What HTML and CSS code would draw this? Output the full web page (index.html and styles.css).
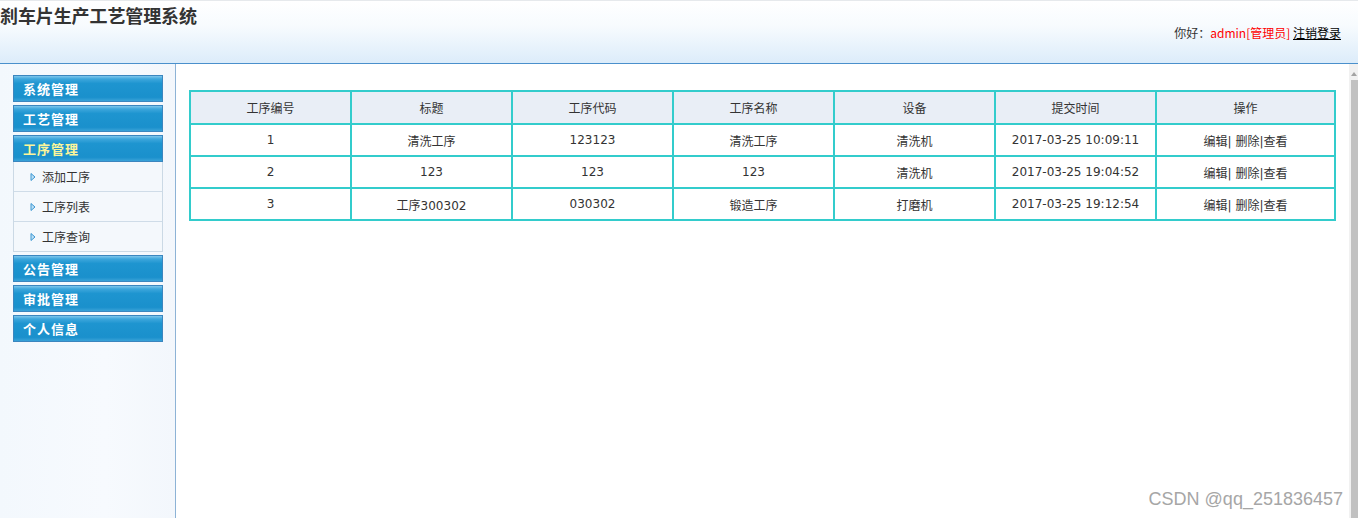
FILE: index.html
```html
<!DOCTYPE html>
<html lang="zh-CN">
<head>
<meta charset="utf-8">
<title>刹车片生产工艺管理系统</title>
<link rel="stylesheet" href="styles.css">
</head>
<body>
<div class="page">
  <header class="top">
    <h1 class="title">刹车片生产工艺管理系统</h1>
    <div class="user">你好：<span class="uname">admin[管理员]</span> <a class="logout" href="#">注销登录</a></div>
  </header>
  <div class="main">
    <aside class="side">
      <div class="menu">系统管理</div>
      <div class="menu">工艺管理</div>
      <div class="menu menu-open">工序管理</div>
      <ul class="sub">
        <li class="sub-item"><svg class="tri" width="6" height="10" viewBox="0 0 6 10"><path d="M1 1.5 L5 5 L1 8.5 Z" fill="#bfe0f5" stroke="#3b97d3" stroke-width="1"/></svg>添加工序</li>
        <li class="sub-item"><svg class="tri" width="6" height="10" viewBox="0 0 6 10"><path d="M1 1.5 L5 5 L1 8.5 Z" fill="#bfe0f5" stroke="#3b97d3" stroke-width="1"/></svg>工序列表</li>
        <li class="sub-item"><svg class="tri" width="6" height="10" viewBox="0 0 6 10"><path d="M1 1.5 L5 5 L1 8.5 Z" fill="#bfe0f5" stroke="#3b97d3" stroke-width="1"/></svg>工序查询</li>
      </ul>
      <div class="menu">公告管理</div>
      <div class="menu">审批管理</div>
      <div class="menu">个人信息</div>
    </aside>
    <section class="content">
      <table class="grid">
        <colgroup>
          <col class="c"><col class="c"><col class="c"><col class="c"><col class="c"><col class="c"><col>
        </colgroup>
        <thead>
          <tr><th>工序编号</th><th>标题</th><th>工序代码</th><th>工序名称</th><th>设备</th><th>提交时间</th><th>操作</th></tr>
        </thead>
        <tbody>
          <tr><td>1</td><td>清洗工序</td><td>123123</td><td>清洗工序</td><td>清洗机</td><td>2017-03-25 10:09:11</td><td>编辑| 删除|查看</td></tr>
          <tr><td>2</td><td>123</td><td>123</td><td>123</td><td>清洗机</td><td>2017-03-25 19:04:52</td><td>编辑| 删除|查看</td></tr>
          <tr><td>3</td><td>工序300302</td><td>030302</td><td>锻造工序</td><td>打磨机</td><td>2017-03-25 19:12:54</td><td>编辑| 删除|查看</td></tr>
        </tbody>
      </table>
    </section>
    <div class="vscroll">
      <div class="arrow"></div>
      <div class="thumb"></div>
    </div>
  </div>
  <div class="watermark">CSDN @qq_251836457</div>
</div>
</body>
</html>
```
FILE: styles.css
```css
html, body {
  margin: 0;
  padding: 0;
}
body {
  width: 1358px;
  height: 518px;
  overflow: hidden;
  font-family: "Noto Sans CJK SC", "DejaVu Sans", sans-serif;
  font-size: 12px;
  color: #333;
  background: #fff;
}
.page {
  position: relative;
  width: 1358px;
  height: 518px;
  display: flex;
  flex-direction: column;
}
.top {
  height: 62px;
  border-top: 1px solid #e6e9ec;
  border-bottom: 1px solid #4a90cc;
  background: linear-gradient(to bottom, #ffffff 0%, #f7fbfe 40%, #dcecfa 100%);
  display: flex;
  justify-content: space-between;
  align-items: flex-start;
  flex-shrink: 0;
}
.title {
  margin: 0;
  padding-top: 2px;
  font-size: 18px;
  line-height: 24px;
  font-weight: bold;
  color: #333;
  letter-spacing: -0.1px;
}
.user {
  padding-top: 24px;
  padding-right: 17px;
  line-height: 16px;
  font-size: 12px;
  color: #333;
}
.uname {
  color: #f00;
}
.logout {
  color: #000;
  text-decoration: underline;
}
.main {
  flex: 1;
  display: flex;
  min-height: 0;
}
.side {
  width: 150px;
  padding: 11px 12px 0 13px;
  border-right: 1px solid #8db3d6;
  background: linear-gradient(to right, #f3f8fd 0%, #f7fafe 60%, #f3f7fc 100%);
  flex-shrink: 0;
}
.menu {
  height: 25px;
  line-height: 25px;
  border: 1px solid #3b86bf;
  margin-bottom: 3px;
  padding-left: 9px;
  color: #fff;
  font-weight: bold;
  font-size: 13px;
  letter-spacing: 1px;
  background: linear-gradient(to bottom, #7ec6ec 0%, #3da6dc 12%, #1e95d0 30%, #1a90cc 85%, #3aa2d8 100%);
}
.menu-open {
  color: #fcf59a;
  margin-bottom: 0;
}
.sub {
  list-style: none;
  margin: 0 0 3px 0;
  padding: 0;
  border: 1px solid #cbd9e5;
  border-top: none;
  background: #f4f8fc;
}
.sub-item {
  height: 29px;
  border-bottom: 1px solid #cfdce8;
  display: flex;
  align-items: center;
  padding-left: 16px;
  color: #333;
  font-size: 12px;
}
.sub-item:last-child {
  border-bottom: none;
  height: 29px;
}
.tri {
  margin-right: 6px;
  flex-shrink: 0;
}
.content {
  flex: 1;
  padding: 26px 13px 0 13px;
  background: #fff;
}
.grid {
  width: 1147px;
  border-collapse: collapse;
  table-layout: fixed;
  font-family: "DejaVu Sans", "Noto Sans CJK SC", sans-serif;
  font-size: 12px;
  color: #333;
}
.grid col.c {
  width: 161px;
}
.grid th,
.grid td {
  border: 2px solid #33cccc;
  height: 30px;
  padding: 0;
  text-align: center;
  vertical-align: middle;
  font-weight: normal;
  white-space: nowrap;
}
.grid th {
  background: #e9eef6;
  height: 31px;
  font-family: "Noto Sans CJK SC", sans-serif;
}
.vscroll {
  width: 9px;
  background: #f1f1f1;
  display: flex;
  flex-direction: column;
  align-items: flex-end;
  flex-shrink: 0;
}
.arrow {
  width: 0;
  height: 0;
  margin: 8px 1px 4px 0;
  border-left: 3px solid transparent;
  border-right: 3px solid transparent;
  border-bottom: 4px solid #a3a3a3;
}
.thumb {
  width: 7px;
  flex: 1;
  background: #c1c1c1;
}
.watermark {
  position: absolute;
  right: 15px;
  bottom: 9px;
  font-family: "Liberation Sans", Arial, sans-serif;
  font-size: 18px;
  line-height: 20px;
  color: #a6a6a6;
}
```
